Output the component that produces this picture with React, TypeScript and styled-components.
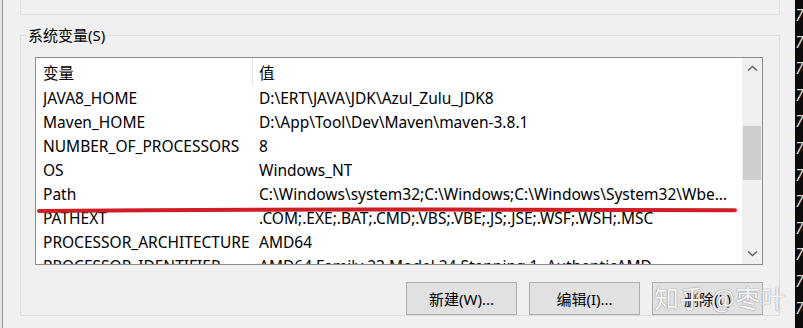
import { FC } from 'react';
import styled, { createGlobalStyle } from 'styled-components';

const GlobalStyle = createGlobalStyle`
    html, body {
        margin: 0;
        padding: 0;
        background: #f0f0f0;
        overflow: hidden;
    }
`;

const UI_FONT = `'Noto Sans', 'Noto Sans CJK SC', sans-serif`;

type EnvVar = { name: string; value: string };

const SYSTEM_VARS: EnvVar[] = [
    { name: 'JAVA8_HOME', value: 'D:\\ERT\\JAVA\\JDK\\Azul_Zulu_JDK8' },
    { name: 'Maven_HOME', value: 'D:\\App\\Tool\\Dev\\Maven\\maven-3.8.1' },
    { name: 'NUMBER_OF_PROCESSORS', value: '8' },
    { name: 'OS', value: 'Windows_NT' },
    {
        name: 'Path',
        value: 'C:\\Windows\\system32;C:\\Windows;C:\\Windows\\System32\\Wbem;C:\\Windows\\System32\\WindowsPowerShell\\v1.0\\',
    },
    { name: 'PATHEXT', value: '.COM;.EXE;.BAT;.CMD;.VBS;.VBE;.JS;.JSE;.WSF;.WSH;.MSC' },
    { name: 'PROCESSOR_ARCHITECTURE', value: 'AMD64' },
    { name: 'PROCESSOR_IDENTIFIER', value: 'AMD64 Family 23 Model 24 Stepping 1, AuthenticAMD' },
];

const Screen = styled.div`
    position: relative;
    display: flex;
    width: 803px;
    height: 328px;
    overflow: hidden;
    font-family: ${UI_FONT};
    color: #000;
`;

const BehindWindow = styled.div`
    width: 2px;
    background: #e4e4e4;
    border-right: 1px solid #9a9a9a;
`;

const Dialog = styled.div`
    flex: 1;
    display: flex;
    flex-direction: column;
    padding: 0 15px 0 17px;
    background: #f0f0f0;
`;

const UserGroupTail = styled.div`
    height: 14px;
    border: 1px solid #dcdcdc;
    border-top: none;
`;

const GroupBox = styled.fieldset`
    margin: 10px 0 0;
    padding: 12px 16px 0 14px;
    border: 1px solid #dcdcdc;
    min-width: 0;
`;

const GroupLegend = styled.legend`
    margin-left: -9px;
    padding: 0 2px;
    font-size: 15px;
    line-height: 20px;
`;

const ListBox = styled.div`
    display: flex;
    height: 206px;
    border: 1px solid #8c8c8c;
    background: #fff;
`;

const ListBody = styled.div`
    flex: 1;
    min-width: 0;
    overflow: hidden;
`;

const Row = styled.div<{ $header?: boolean }>`
    display: grid;
    grid-template-columns: 217px 1fr;
    height: ${(p) => (p.$header ? 28 : 24)}px;
    align-items: center;
    font-size: 15.5px;
    white-space: nowrap;
`;

const Cell = styled.div<{ $divider?: boolean }>`
    height: 100%;
    display: flex;
    align-items: center;
    padding: 0 0 0 7px;
    overflow: hidden;
    border-right: ${(p) => (p.$divider ? '1px solid #e5e5e5' : 'none')};

    & > span {
        overflow: hidden;
        text-overflow: ellipsis;
    }
`;

const ValueCell = styled(Cell)`
    padding: 0 8px 0 6px;
`;

const ScrollBar = styled.div`
    width: 20px;
    display: flex;
    flex-direction: column;
    background: #f0f0f0;
`;

const ArrowButton = styled.div`
    height: 21px;
    display: flex;
    align-items: center;
    justify-content: center;
    color: #606060;
`;

const Track = styled.div`
    flex: 1;
    padding: 47px 1px 0;
`;

const Thumb = styled.div`
    height: 54px;
    background: #cdcdcd;
`;

const ButtonRow = styled.div`
    display: flex;
    justify-content: flex-end;
    gap: 12px;
    margin-top: 17px;
`;

const DialogButton = styled.button`
    width: 111px;
    height: 33px;
    padding: 0;
    border: 1px solid #adadad;
    background: #e1e1e1;
    font-family: ${UI_FONT};
    font-size: 15px;
    color: #000;
`;

const Console = styled.div`
    width: 8px;
    background: #0c0c0c;
    overflow: hidden;
    padding-top: 3px;
    font-family: 'DejaVu Sans Mono', monospace;
    font-size: 15px;
    font-style: italic;
    line-height: 26.6px;
    color: #d8d8c8;
    white-space: pre;
`;

const Highlight = styled.svg`
    position: absolute;
    left: 36px;
    top: 205px;
    pointer-events: none;
`;

const Watermark = styled.div`
    position: absolute;
    left: 654px;
    top: 279px;
    font-family: 'Noto Sans CJK SC', sans-serif;
    font-size: 25px;
    letter-spacing: 0.5px;
    color: rgba(255, 255, 255, 0.94);
    text-shadow: 0 0 1px #8a8a8a, 0 0 1px #8a8a8a;
    pointer-events: none;
`;

const Chevron: FC<{ down?: boolean }> = ({ down }) => (
    <svg width="11" height="7" viewBox="0 0 11 7">
        <path
            d={down ? 'M1 1.5 L5.5 5.5 L10 1.5' : 'M1 5.5 L5.5 1.5 L10 5.5'}
            fill="none"
            stroke="currentColor"
            strokeWidth="1.5"
        />
    </svg>
);

export default function App() {
    return (
        <>
            <GlobalStyle />
            <Screen>
                <BehindWindow />
                <Dialog>
                    <UserGroupTail />
                    <GroupBox>
                        <GroupLegend>系统变量(S)</GroupLegend>
                        <ListBox>
                            <ListBody>
                                <Row $header>
                                    <Cell $divider>变量</Cell>
                                    <ValueCell>值</ValueCell>
                                </Row>
                                {SYSTEM_VARS.map((v) => (
                                    <Row key={v.name}>
                                        <Cell>
                                            <span>{v.name}</span>
                                        </Cell>
                                        <ValueCell>
                                            <span>{v.value}</span>
                                        </ValueCell>
                                    </Row>
                                ))}
                            </ListBody>
                            <ScrollBar>
                                <ArrowButton>
                                    <Chevron />
                                </ArrowButton>
                                <Track>
                                    <Thumb />
                                </Track>
                                <ArrowButton>
                                    <Chevron down />
                                </ArrowButton>
                            </ScrollBar>
                        </ListBox>
                        <ButtonRow>
                            <DialogButton>新建(W)...</DialogButton>
                            <DialogButton>编辑(I)...</DialogButton>
                            <DialogButton>删除(L)</DialogButton>
                        </ButtonRow>
                    </GroupBox>
                </Dialog>
                <Console>{Array(13).fill('7').join('\n')}</Console>
                {/* hand-drawn marker under the Path row */}
                <Highlight width="704" height="10" viewBox="0 0 704 10">
                    <path d="M3 6 Q 200 4.2 400 4.6 T 699 5.2" fill="none" stroke="#cf1f26" strokeWidth="4" strokeLinecap="round" />
                </Highlight>
                <Watermark>知乎 @枣叶</Watermark>
            </Screen>
        </>
    );
}
